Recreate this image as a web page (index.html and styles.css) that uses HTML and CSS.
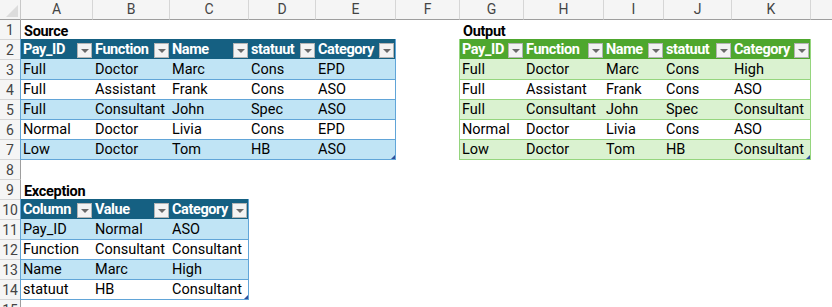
FILE: index.html
```html
<!DOCTYPE html>
<html>
<head>
<meta charset="utf-8">
<link rel="stylesheet" href="styles.css">
</head>
<body>
<div class="sheet">
  <div class="corner"><span class="corner-tri"></span></div>
  <div class="colhdr">A</div>
  <div class="colhdr">B</div>
  <div class="colhdr">C</div>
  <div class="colhdr">D</div>
  <div class="colhdr">E</div>
  <div class="colhdr">F</div>
  <div class="colhdr">G</div>
  <div class="colhdr">H</div>
  <div class="colhdr">I</div>
  <div class="colhdr">J</div>
  <div class="colhdr">K</div>
  <div class="colhdr last"></div>

  <div class="rowhdr r1">1</div>
  <div class="rowhdr r2">2</div>
  <div class="rowhdr r3">3</div>
  <div class="rowhdr r4">4</div>
  <div class="rowhdr r5">5</div>
  <div class="rowhdr r6">6</div>
  <div class="rowhdr r7">7</div>
  <div class="rowhdr r8">8</div>
  <div class="rowhdr r9">9</div>
  <div class="rowhdr r10">10</div>
  <div class="rowhdr r11">11</div>
  <div class="rowhdr r12">12</div>
  <div class="rowhdr r13">13</div>
  <div class="rowhdr r14">14</div>
  <div class="rowhdr r15">15</div>

  <div class="label label-source">Source</div>
  <div class="label label-output">Output</div>
  <div class="label label-exception">Exception</div>

  <div class="xtable blue source">
    <div class="trow head">
      <div class="c">Pay_ID<span class="dd"></span></div>
      <div class="c">Function<span class="dd"></span></div>
      <div class="c">Name<span class="dd"></span></div>
      <div class="c">statuut<span class="dd"></span></div>
      <div class="c">Category<span class="dd"></span></div>
    </div>
    <div class="trow band"><div class="c">Full</div><div class="c">Doctor</div><div class="c">Marc</div><div class="c">Cons</div><div class="c">EPD</div></div>
    <div class="trow"><div class="c">Full</div><div class="c">Assistant</div><div class="c">Frank</div><div class="c">Cons</div><div class="c">ASO</div></div>
    <div class="trow band"><div class="c">Full</div><div class="c">Consultant</div><div class="c">John</div><div class="c">Spec</div><div class="c">ASO</div></div>
    <div class="trow"><div class="c">Normal</div><div class="c">Doctor</div><div class="c">Livia</div><div class="c">Cons</div><div class="c">EPD</div></div>
    <div class="trow band"><div class="c">Low</div><div class="c">Doctor</div><div class="c">Tom</div><div class="c">HB</div><div class="c">ASO</div></div>
    <span class="handle"></span>
  </div>

  <div class="xtable green output">
    <div class="trow head">
      <div class="c">Pay_ID<span class="dd"></span></div>
      <div class="c">Function<span class="dd"></span></div>
      <div class="c">Name<span class="dd"></span></div>
      <div class="c">statuut<span class="dd"></span></div>
      <div class="c">Category<span class="dd"></span></div>
    </div>
    <div class="trow band"><div class="c">Full</div><div class="c">Doctor</div><div class="c">Marc</div><div class="c">Cons</div><div class="c">High</div></div>
    <div class="trow"><div class="c">Full</div><div class="c">Assistant</div><div class="c">Frank</div><div class="c">Cons</div><div class="c">ASO</div></div>
    <div class="trow band"><div class="c">Full</div><div class="c">Consultant</div><div class="c">John</div><div class="c">Spec</div><div class="c">Consultant</div></div>
    <div class="trow"><div class="c">Normal</div><div class="c">Doctor</div><div class="c">Livia</div><div class="c">Cons</div><div class="c">ASO</div></div>
    <div class="trow band"><div class="c">Low</div><div class="c">Doctor</div><div class="c">Tom</div><div class="c">HB</div><div class="c">Consultant</div></div>
    <span class="handle"></span>
  </div>

  <div class="xtable blue exception">
    <div class="trow head">
      <div class="c">Column<span class="dd"></span></div>
      <div class="c">Value<span class="dd"></span></div>
      <div class="c">Category<span class="dd"></span></div>
    </div>
    <div class="trow band"><div class="c">Pay_ID</div><div class="c">Normal</div><div class="c">ASO</div></div>
    <div class="trow"><div class="c">Function</div><div class="c">Consultant</div><div class="c">Consultant</div></div>
    <div class="trow band"><div class="c">Name</div><div class="c">Marc</div><div class="c">High</div></div>
    <div class="trow"><div class="c">statuut</div><div class="c">HB</div><div class="c">Consultant</div></div>
    <span class="handle"></span>
  </div>
</div>
</body>
</html>
```

FILE: styles.css
```css
* { box-sizing: border-box; }
html, body {
  margin: 0;
  padding: 0;
  background: #ffffff;
  overflow: hidden;
}
body {
  width: 832px;
  height: 307px;
  font-family: Roboto, "Liberation Sans", sans-serif;
  font-size: 14.5px;
  color: #000;
}
.sheet {
  display: grid;
  grid-template-columns: 21px 72px 77px 79px 67px 80px 64px 64px 80px 60px 68px 79px 1fr;
  grid-template-rows: 20px repeat(15, 20px);
  width: 832px;
  height: 307px;
  overflow: hidden;
  position: relative;
}
.corner {
  grid-column: 1;
  grid-row: 1;
  background: #f5f5f5;
  border-right: 1px solid #c8c8c8;
  border-bottom: 1px solid #9e9e9e;
  position: relative;
}
.corner-tri {
  position: absolute;
  right: 2px;
  bottom: 2px;
  width: 0;
  height: 0;
  border-left: 12px solid transparent;
  border-bottom: 12px solid #dcdcdc;
}
.colhdr {
  grid-row: 1;
  background: #f5f5f5;
  border-right: 1px solid #d6d6d6;
  border-bottom: 1px solid #9e9e9e;
  color: #444;
  font-size: 14px;
  line-height: 19px;
  text-align: center;
}
.colhdr.last { border-right: none; }
.rowhdr {
  grid-column: 1;
  background: #f5f5f5;
  border-right: 1px solid #9e9e9e;
  border-bottom: 1px solid #d6d6d6;
  color: #444;
  font-size: 14px;
  line-height: 20px;
  text-align: center;
}
.r1 { grid-row: 2; }
.r2 { grid-row: 3; }
.r3 { grid-row: 4; }
.r4 { grid-row: 5; }
.r5 { grid-row: 6; }
.r6 { grid-row: 7; }
.r7 { grid-row: 8; }
.r8 { grid-row: 9; }
.r9 { grid-row: 10; }
.r10 { grid-row: 11; }
.r11 { grid-row: 12; }
.r12 { grid-row: 13; }
.r13 { grid-row: 14; }
.r14 { grid-row: 15; }
.r15 { grid-row: 16; }

.label {
  font-weight: bold;
  letter-spacing: -0.3px;
  padding-left: 3px;
  line-height: 19px;
  padding-top: 2px;
  white-space: nowrap;
}
.label-source { grid-column: 2 / span 2; grid-row: 2; }
.label-output { grid-column: 8 / span 2; grid-row: 2; }
.label-exception { grid-column: 2 / span 3; grid-row: 10; }

.xtable {
  position: relative;
  margin-top: -1px;
  margin-left: -1px;
  border-left: 1px solid;
  border-right: 1px solid;
  border-bottom: 1px solid;
  display: flex;
  flex-direction: column;
}
.source { grid-column: 2 / span 5; grid-row: 3 / span 6; }
.output { grid-column: 8 / span 5; grid-row: 3 / span 6; }
.exception { grid-column: 2 / span 3; grid-row: 11 / span 5; }

.source .trow { grid-template-columns: 72px 77px 79px 67px 79px; }
.output .trow { grid-template-columns: 64px 80px 60px 68px 78px; }
.exception .trow { grid-template-columns: 72px 77px 78px; }

.trow {
  display: grid;
  height: 20px;
  border-top: 1px solid;
  background: #ffffff;
}
.trow.head { border-top: none; }
.trow.head + .trow { border-top: none; }
.c {
  position: relative;
  padding-left: 2px;
  padding-top: 2px;
  line-height: 18px;
  white-space: nowrap;
  overflow: hidden;
}
.trow:not(.head):not(.band) .c,
.trow.band ~ .trow .c { padding-top: 1px; }
.head + .trow .c { padding-top: 2px; }
.head .c {
  font-weight: bold;
  letter-spacing: -0.4px;
  color: #ffffff;
  padding-top: 2px;
}
.dd {
  position: absolute;
  right: 1px;
  top: 4px;
  width: 15px;
  height: 15px;
  background: #f3f3f3;
  border: 1px solid #b4b4b4;
}
.dd::after {
  content: "";
  position: absolute;
  left: 3px;
  top: 5px;
  border-left: 4px solid transparent;
  border-right: 4px solid transparent;
  border-top: 4px solid #6a6a6a;
}
.handle {
  position: absolute;
  right: 0;
  bottom: 0;
  width: 0;
  height: 0;
  border-left: 4px solid transparent;
  border-bottom: 4px solid #2f4f9a;
}

.blue { border-color: #61a5d8; }
.blue .trow { border-color: #61a5d8; }
.blue .head { background: #156082; }
.blue .band { background: #c0e4f5; }

.green { border-color: #95d57e; }
.green .trow { border-color: #95d57e; }
.green .head { background: #4ea72e; }
.green .band { background: #daf2d0; }
```
